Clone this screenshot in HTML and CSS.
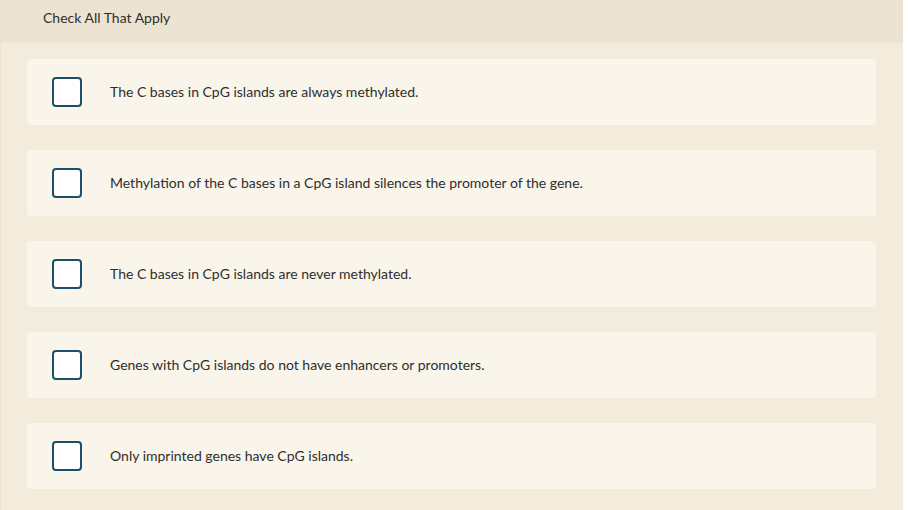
FILE: index.html
```html
<!DOCTYPE html>
<html>
<head>
<meta charset="utf-8">
<link rel="stylesheet" href="styles.css">
</head>
<body>
<div class="question">
  <div class="header">Check All That Apply</div>
  <div class="options">
    <div class="option"><span class="box"></span><span class="label">The C bases in CpG islands are always methylated.</span></div>
    <div class="option"><span class="box"></span><span class="label">Methylation of the C bases in a CpG island silences the promoter of the gene.</span></div>
    <div class="option"><span class="box"></span><span class="label">The C bases in CpG islands are never methylated.</span></div>
    <div class="option"><span class="box"></span><span class="label">Genes with CpG islands do not have enhancers or promoters.</span></div>
    <div class="option"><span class="box"></span><span class="label">Only imprinted genes have CpG islands.</span></div>
  </div>
</div>
</body>
</html>
```
FILE: styles.css
```css
html, body {
  margin: 0;
  padding: 0;
  background: #ffffff;
}
body {
  font-family: Lato, "Open Sans", sans-serif;
  color: #2e2e2e;
}
.question {
  width: 903px;
  height: 510px;
  background: #f3ecdc;
  border-left: 1px solid #ece4d4;
  box-sizing: border-box;
}
.header {
  height: 43px;
  background: #ece3d3;
  padding-left: 42px;
  font-size: 14px;
  line-height: 35px;
  box-sizing: border-box;
}
.options {
  display: flex;
  flex-direction: column;
  gap: 25px;
  padding: 16px 0 0 26px;
}
.option {
  width: 849px;
  height: 66px;
  background: #f9f5ea;
  border-radius: 4px;
  display: flex;
  align-items: center;
  box-sizing: border-box;
  padding-left: 25px;
}
.box {
  width: 30px;
  height: 30px;
  box-sizing: border-box;
  border: 2px solid #1d4f69;
  border-radius: 4px;
  background: #ffffff;
  flex: none;
}
.label {
  margin-left: 28px;
  margin-bottom: 2px;
  font-size: 14px;
}
```
